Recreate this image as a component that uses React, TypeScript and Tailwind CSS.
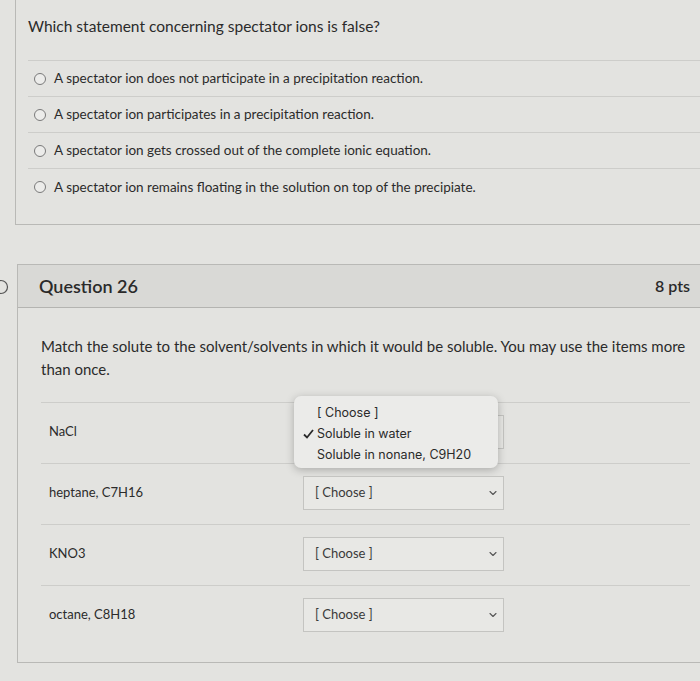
import { ChevronDown } from 'lucide-react';

const options = [
  'A spectator ion does not participate in a precipitation reaction.',
  'A spectator ion participates in a precipitation reaction.',
  'A spectator ion gets crossed out of the complete ionic equation.',
  'A spectator ion remains floating in the solution on top of the precipiate.',
];

const rows = ['NaCl', 'heptane, C7H16', 'KNO3', 'octane, C8H18'];

function Select({ open }: { open?: boolean }) {
  return (
    <div className="w-[201px] h-[34px] border border-[#c4c4c1] bg-[#e8e8e5] flex items-center justify-between pl-[11px] pr-[4px] text-[13px] text-[#3a3a3a]">
      <span>{open ? '' : '[ Choose ]'}</span>
      <ChevronDown size={12} strokeWidth={2.2} className="text-[#555]" />
    </div>
  );
}

export default function App() {
  return (
    <div
      className="w-[700px] h-[681px] overflow-hidden bg-[#e3e3e0] text-[#2b2b2b]"
      style={{ fontFamily: 'Lato, "Open Sans", sans-serif' }}
    >
      {/* previous question, continued */}
      <div className="ml-[15px] h-[225px] border-l border-b border-[#b9b9b6] pl-[12px]">
        <p className="pt-[16px] text-[15.5px] leading-[20px]">Which statement concerning spectator ions is false?</p>
        <div className="mt-[24px] border-t border-[#cdcdca]">
          {options.map((o, i) => (
            <div
              key={o}
              className={`h-[36px] flex items-center gap-[8px] pl-[6px] text-[13.5px] ${
                i < options.length - 1 ? 'border-b border-[#cdcdca]' : ''
              }`}
            >
              <span className="w-[12px] h-[12px] rounded-full border border-[#7a7a7a] bg-[#ececea]" />
              <span>{o}</span>
            </div>
          ))}
        </div>
      </div>

      {/* Question 26 */}
      <div className="relative mt-[39px] ml-[17px] border-t border-l border-b border-[#b9b9b6] h-[399px]">
        <svg className="absolute left-[-25px] top-[14px]" width="16" height="16" viewBox="0 0 16 16">
          <circle cx="8" cy="8" r="6.5" fill="none" stroke="#555" strokeWidth="1.2" />
        </svg>
        <div className="h-[43px] bg-[#d9d9d6] border-b border-[#b4b4b1] flex items-center justify-between pl-[21px] pr-[10px]">
          <span className="text-[18px] font-semibold text-[#2a2a2a]">Question 26</span>
          <span className="text-[16px] font-semibold text-[#2a2a2a]">8 pts</span>
        </div>
        <div className="pl-[23px] pr-[10px]">
          <p className="pt-[27px] text-[15px] leading-[23px]">
            Match the solute to the solvent/solvents in which it would be soluble. You may use the items more than once.
          </p>
          <div className="mt-[21px] border-t border-[#cdcdca]">
            {rows.map((r, i) => (
              <div
                key={r}
                className={`relative h-[61px] flex items-start ${i < rows.length - 1 ? 'border-b border-[#cdcdca]' : ''}`}
              >
                <span className="w-[262px] pl-[8px] pt-[19px] text-[13px]">{r}</span>
                <div className="pt-[12px]">
                  <Select open={i === 0} />
                </div>
                {i === 0 && (
                  <div
                    className="absolute left-[253px] top-[-7px] w-[204px] h-[72px] rounded-[7px] bg-[#ebebe9] shadow-[0_2px_8px_rgba(0,0,0,0.25)] text-[12.5px] leading-[21px] text-[#2a2a2a] pt-[6px]"
                    style={{ fontFamily: 'Inter, "Open Sans", sans-serif' }}
                  >
                    <div className="pl-[23px]">[ Choose ]</div>
                    <div className="flex items-center pl-[9px]">
                      <svg width="11" height="10" viewBox="0 0 11 10" className="mr-[3px]">
                        <path d="M1 5.5 L4 8.5 L10 1" fill="none" stroke="#2a2a2a" strokeWidth="1.8" />
                      </svg>
                      <span>Soluble in water</span>
                    </div>
                    <div className="pl-[23px]">Soluble in nonane, C9H20</div>
                  </div>
                )}
              </div>
            ))}
          </div>
        </div>
      </div>
    </div>
  );
}
